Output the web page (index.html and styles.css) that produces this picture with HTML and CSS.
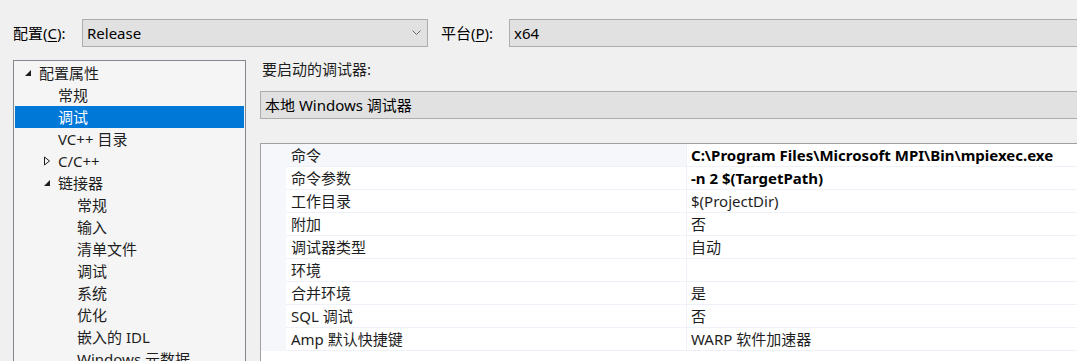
FILE: index.html
```html
<!DOCTYPE html>
<html lang="zh-CN">
<head>
<meta charset="utf-8">
<title>属性页</title>
<link rel="stylesheet" href="styles.css">
</head>
<body>
<div class="page">
  <div class="toolbar">
    <span class="lbl lbl-config">配置(<u>C</u>):</span>
    <div class="combo combo-config">
      <span class="combo-text">Release</span>
      <svg class="chev" width="9" height="6" viewBox="0 0 9 6"><path d="M0.5 0.5 L4.5 4.5 L8.5 0.5" fill="none" stroke="#6d6d6d" stroke-width="1"/></svg>
    </div>
    <span class="lbl lbl-platform">平台(<u>P</u>):</span>
    <div class="combo combo-platform"><span class="combo-text">x64</span></div>
  </div>
  <div class="main">
    <div class="tree">
      <div class="node lvl0"><span class="exp"><svg width="8" height="8" viewBox="0 0 8 8"><path d="M7 1 L7 7 L1 7 Z" fill="#1e1e1e"/></svg></span>配置属性</div>
      <div class="node lvl1"><span class="exp"></span>常规</div>
      <div class="node lvl1 selected"><span class="exp"></span>调试</div>
      <div class="node lvl1"><span class="exp"></span>VC++ 目录</div>
      <div class="node lvl1"><span class="exp"><svg width="8" height="10" viewBox="0 0 8 10"><path d="M1.5 1 L6.5 5 L1.5 9 Z" fill="none" stroke="#1e1e1e" stroke-width="1"/></svg></span>C/C++</div>
      <div class="node lvl1"><span class="exp"><svg width="8" height="8" viewBox="0 0 8 8"><path d="M7 1 L7 7 L1 7 Z" fill="#1e1e1e"/></svg></span>链接器</div>
      <div class="node lvl2"><span class="exp"></span>常规</div>
      <div class="node lvl2"><span class="exp"></span>输入</div>
      <div class="node lvl2"><span class="exp"></span>清单文件</div>
      <div class="node lvl2"><span class="exp"></span>调试</div>
      <div class="node lvl2"><span class="exp"></span>系统</div>
      <div class="node lvl2"><span class="exp"></span>优化</div>
      <div class="node lvl2"><span class="exp"></span>嵌入的 IDL</div>
      <div class="node lvl2"><span class="exp"></span>Windows 元数据</div>
    </div>
    <div class="panel">
      <div class="panel-label">要启动的调试器:</div>
      <div class="combo combo-debugger"><span class="combo-text">本地 Windows 调试器</span></div>
      <div class="grid">
        <div class="row first"><span class="gutter"></span><span class="name">命令</span><span class="value bold">C:\Program Files\Microsoft MPI\Bin\mpiexec.exe</span></div>
        <div class="row"><span class="gutter"></span><span class="name">命令参数</span><span class="value bold">-n 2 $(TargetPath)</span></div>
        <div class="row"><span class="gutter"></span><span class="name">工作目录</span><span class="value">$(ProjectDir)</span></div>
        <div class="row"><span class="gutter"></span><span class="name">附加</span><span class="value">否</span></div>
        <div class="row"><span class="gutter"></span><span class="name">调试器类型</span><span class="value">自动</span></div>
        <div class="row"><span class="gutter"></span><span class="name">环境</span><span class="value"></span></div>
        <div class="row"><span class="gutter"></span><span class="name">合并环境</span><span class="value">是</span></div>
        <div class="row"><span class="gutter"></span><span class="name">SQL 调试</span><span class="value">否</span></div>
        <div class="row"><span class="gutter"></span><span class="name">Amp 默认快捷键</span><span class="value">WARP 软件加速器</span></div>
      </div>
    </div>
  </div>
</div>
</body>
</html>
```

FILE: styles.css
```css
html, body {
  margin: 0;
  padding: 0;
  height: 100%;
  overflow: hidden;
}
body {
  background: #f0f0f0;
  font-family: "Noto Sans", "Noto Sans CJK SC", sans-serif;
  font-size: 15px;
  color: #1e1e1e;
}
.page {
  width: 1077px;
  height: 361px;
  overflow: hidden;
}
.toolbar {
  display: flex;
  align-items: center;
  padding: 19px 0 0 13px;
  height: 28px;
}
.lbl {
  color: #000;
  line-height: 28px;
  white-space: nowrap;
}
.lbl u {
  text-underline-offset: 2px;
}
.lbl-config {
  width: 69px;
}
.lbl-platform {
  width: 68px;
  margin-left: 13px;
}
.combo {
  box-sizing: border-box;
  height: 28px;
  background: #e1e1e1;
  border: 1px solid #adadad;
  display: flex;
  align-items: center;
  color: #000;
}
.combo-text {
  padding-left: 4px;
  line-height: 26px;
  white-space: nowrap;
}
.combo-config {
  width: 346px;
  justify-content: space-between;
}
.chev {
  margin-right: 6px;
}
.combo-platform {
  flex: 1;
  margin-right: -10px;
}
.main {
  display: flex;
  margin-top: 13px;
}
.tree {
  box-sizing: border-box;
  margin-left: 13px;
  width: 233px;
  height: 320px;
  background: #f5f5f5;
  border: 1px solid #828790;
  padding: 1px;
}
.node {
  height: 22px;
  line-height: 22px;
  display: flex;
  align-items: center;
  white-space: nowrap;
  color: #1e1e1e;
}
.node.selected {
  background: #0078d7;
  color: #fff;
}
.exp {
  box-sizing: border-box;
  width: 19px;
  height: 22px;
  padding-left: 4px;
  display: flex;
  align-items: center;
  justify-content: flex-start;
  flex: none;
}
.lvl0 { padding-left: 5px; }
.lvl1 { padding-left: 24px; }
.lvl2 { padding-left: 43px; }
.panel {
  flex: 1;
  margin-left: 14px;
  display: flex;
  flex-direction: column;
}
.panel-label {
  margin-top: -2px;
  padding-left: 2px;
  line-height: 22px;
  color: #1e1e1e;
}
.combo-debugger {
  margin-top: 11px;
  margin-right: -10px;
}
.grid {
  margin-top: 24px;
  margin-right: -2px;
  border-top: 1px solid #a0a0a0;
  border-left: 1px solid #a0a0a0;
  background: #fff;
  height: 230px;
}
.row {
  display: flex;
  height: 23px;
}
.gutter {
  width: 25px;
  flex: none;
  background: #f5f7fb;
}
.name {
  box-sizing: border-box;
  width: 401px;
  flex: none;
  padding-left: 5px;
  line-height: 23px;
  border-bottom: 1px solid #eef1f7;
  border-right: 1px solid #eef1f7;
  white-space: nowrap;
}
.row.first .name {
  background: #f5f7fb;
}
.value {
  box-sizing: border-box;
  flex: 1;
  padding-left: 4px;
  line-height: 23px;
  border-bottom: 1px solid #eef1f7;
  white-space: nowrap;
  color: #1e1e1e;
}
.value.bold {
  font-weight: bold;
  color: #000;
}
```
